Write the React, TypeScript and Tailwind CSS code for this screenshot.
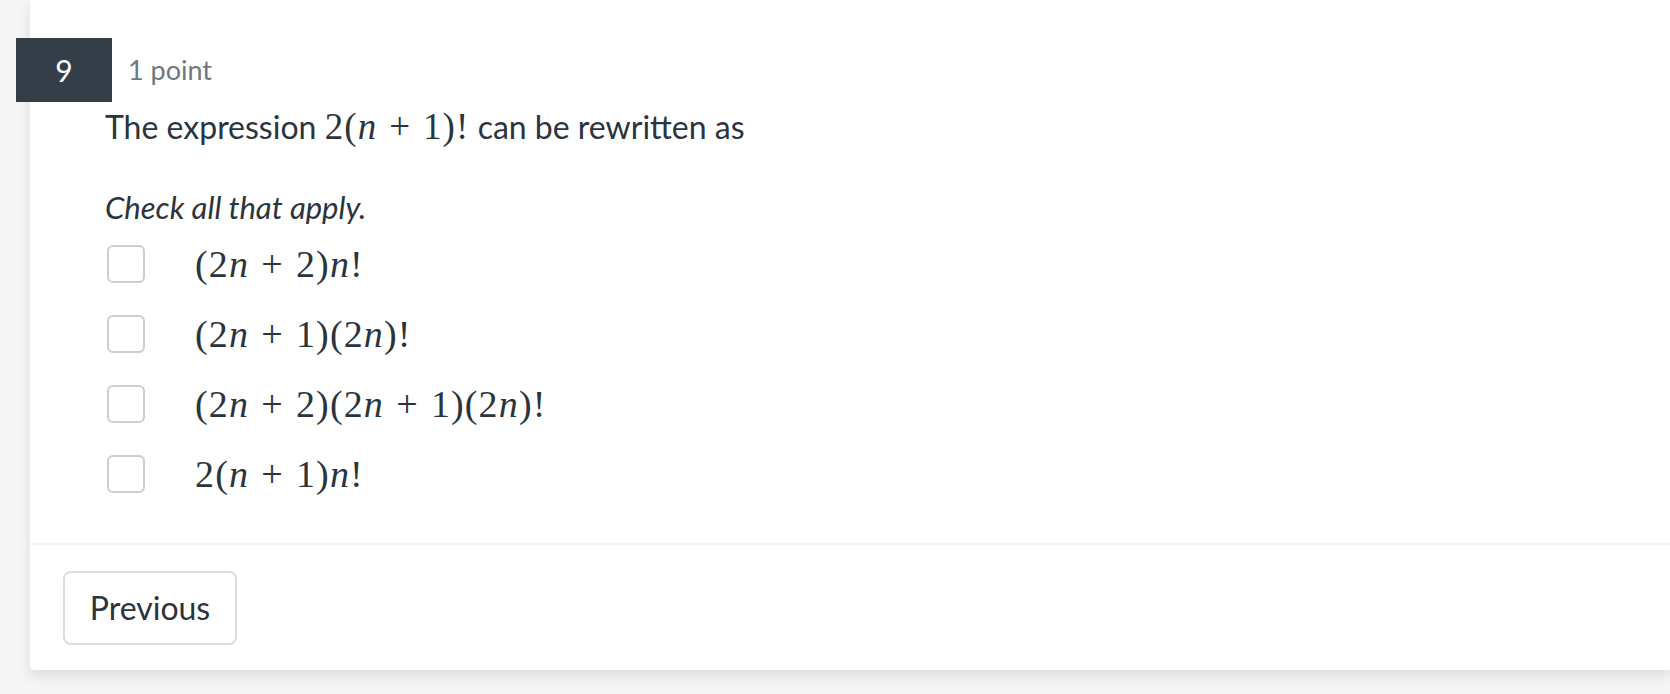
import type { ReactNode } from 'react'

const N = () => <span className="italic">n</span>
const Plus = () => <span className="px-[0.32em]">+</span>

function Math({ children, size = 'text-[38px]' }: { children: ReactNode; size?: string }) {
  return (
    <span className={`font-['Liberation_Serif',serif] tracking-[0.03em] leading-none ${size}`}>
      {children}
    </span>
  )
}

const options: ReactNode[] = [
  <>(2<N /><Plus />2)<N />!</>,
  <>(2<N /><Plus />1)(2<N />)!</>,
  <>(2<N /><Plus />2)(2<N /><Plus />1)(2<N />)!</>,
  <>2(<N /><Plus />1)<N />!</>,
]

export default function App() {
  return (
    <div className="w-[1670px] h-[694px] overflow-hidden bg-[#f5f5f5] pl-[30px] font-['Lato',sans-serif] text-[#2b343d]">
      <div className="h-[670px] bg-white rounded-bl-[4px] shadow-[0_6px_14px_rgba(0,0,0,0.10)]">
        {/* Question header */}
        <div className="pt-[38px] flex items-center">
          <div className="-ml-[14px] w-[96px] h-[64px] bg-[#343e48] text-white text-[30px] flex items-center justify-center">
            9
          </div>
          <span className="ml-[16px] text-[27px] text-[#6d7882]">1 point</span>
        </div>

        <div className="pl-[75px]">
          <p className="mt-[5px] text-[32px] leading-[40px]">
            The expression{' '}
            <Math size="text-[37px]">
              2(<N /><Plus />1)!
            </Math>{' '}
            can be rewritten as
          </p>

          <p className="mt-[40px] text-[31px] leading-[40px] italic">Check all that apply.</p>

          <div className="mt-[18px] flex flex-col gap-[32px]">
            {options.map((o, i) => (
              <label key={i} className="flex items-center h-[38px]">
                <span className="ml-[2px] w-[38px] h-[38px] rounded-[6px] border-2 border-[#c9ced3] bg-white shrink-0" />
                <span className="ml-[50px]">
                  <Math>{o}</Math>
                </span>
              </label>
            ))}
          </div>
        </div>

        <div className="mt-[50px] h-[2px] bg-[#f2f2f2]" />

        <div className="pt-[26px] pl-[33px]">
          <button className="w-[174px] h-[74px] rounded-[8px] border-2 border-[#dcdcdc] bg-white text-[32px] text-[#2b343d]">
            Previous
          </button>
        </div>
      </div>
    </div>
  )
}
